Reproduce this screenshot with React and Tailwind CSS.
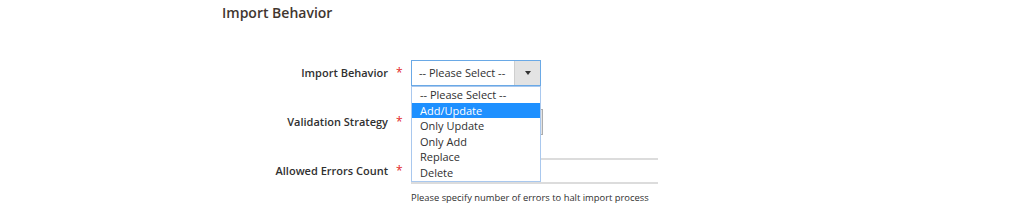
export default function App() {
    const options = ["-- Please Select --", "Add/Update", "Only Update", "Only Add", "Replace", "Delete"];
    const selected = "Add/Update";

    return (
        <div className="relative w-[1024px] h-[218px] bg-white overflow-hidden text-[#303030]" style={{ fontFamily: '"Open Sans", sans-serif' }}>
            {/* Section title */}
            <h2 className="pl-[222px] pt-[3px] text-[14px] leading-[20px] font-semibold text-[#41362f]">Import Behavior</h2>

            {/* Fields */}
            <div className="flex flex-col gap-[23px] mt-[37px]">
                <div className="flex items-center h-[26px]">
                    <label className="w-[388px] text-right text-[11px] font-semibold">Import Behavior</label>
                    <span className="w-[23px] pl-[8px] text-[12px] text-[#e22626]">*</span>
                    <div className="relative w-[130px] h-[26px] border border-[#6aa9e6] flex bg-white">
                        <span className="flex-1 pl-[7px] text-[11px] leading-[24px]">-- Please Select --</span>
                        <span className="w-[26px] bg-[#e3e3e3] border-l border-[#cfcfcf] flex items-center justify-center">
                            <span className="w-0 h-0 border-l-[3px] border-r-[3px] border-t-[4px] border-l-transparent border-r-transparent border-t-[#333]" />
                        </span>
                    </div>
                </div>

                <div className="flex items-center h-[26px]">
                    <label className="w-[388px] text-right text-[11px] font-semibold">Validation Strategy</label>
                    <span className="w-[23px] pl-[8px] text-[12px] text-[#e22626]">*</span>
                    <div className="w-[132px] h-[26px] border border-[#adadad] flex bg-white">
                        <span className="flex-1" />
                        <span className="w-[26px] bg-[#e3e3e3] border-l border-[#adadad]" />
                    </div>
                </div>

                <div className="flex flex-col">
                    <div className="flex items-center h-[26px]">
                        <label className="w-[388px] text-right text-[11px] font-semibold">Allowed Errors Count</label>
                        <span className="w-[23px] pl-[8px] text-[12px] text-[#e22626]">*</span>
                        <div className="w-[247px] h-[26px] border-y-2 border-l border-[#dcdcdc] bg-white" />
                    </div>
                    <p className="pl-[411px] mt-[7px] text-[9.4px] leading-[14px]">Please specify number of errors to halt import process</p>
                </div>
            </div>

            {/* Open dropdown list */}
            <ul className="absolute left-[411px] top-[86px] w-[130px] border border-[#a9c8ee] bg-white">
                {options.map((o) => (
                    <li
                        key={o}
                        className={`h-[15.6px] pl-[8px] text-[11px] leading-[15.6px] ${o === selected ? "bg-[#1e90ff] text-white" : "text-[#303030]"}`}
                    >
                        {o}
                    </li>
                ))}
            </ul>
        </div>
    );
}
